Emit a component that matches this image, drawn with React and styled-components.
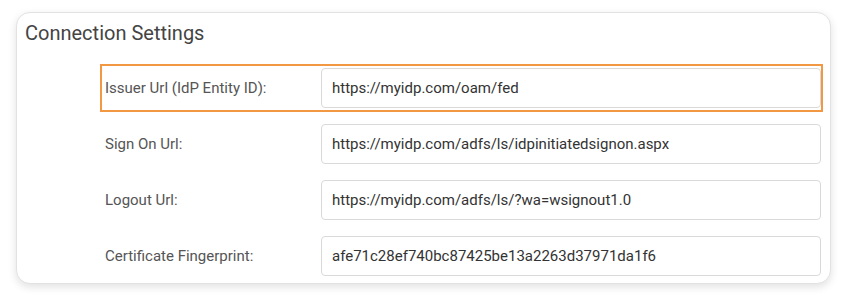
import styled, { createGlobalStyle } from "styled-components";

const GlobalStyle = createGlobalStyle`
    html, body {
        margin: 0;
        min-height: 304px;
        background: #fff;
        font-family: Roboto, "Liberation Sans", sans-serif;
    }
`;

const fields = [
    { label: "Issuer Url (IdP Entity ID):", value: "https://myidp.com/oam/fed", active: true },
    { label: "Sign On Url:", value: "https://myidp.com/adfs/ls/idpinitiatedsignon.aspx" },
    { label: "Logout Url:", value: "https://myidp.com/adfs/ls/?wa=wsignout1.0" },
    { label: "Certificate Fingerprint:", value: "afe71c28ef740bc87425be13a2263d37971da1f6" },
];

const App = () => {
    return (
        <>
            <GlobalStyle />
            <Page>
                <Card>
                    <Title>Connection Settings</Title>
                    <Form>
                        {fields.map((f) => (
                            <Row key={f.label} $active={f.active}>
                                <Label>{f.label}</Label>
                                <Input type="text" defaultValue={f.value} readOnly />
                            </Row>
                        ))}
                    </Form>
                </Card>
            </Page>
        </>
    );
};

const Page = styled.div`
    height: 304px;
    padding: 12px 0 0 16px;
    box-sizing: border-box;
`;

const Card = styled.div`
    box-sizing: border-box;
    width: 815px;
    height: 272px;
    background: #fff;
    border: 1px solid #e2e2e2;
    border-radius: 14px;
    box-shadow: 0 3px 8px rgba(0, 0, 0, 0.12);
`;

const Title = styled.h2`
    margin: 0;
    padding: 8px 8px 0;
    font-size: 20px;
    font-weight: 400;
    line-height: 24px;
    color: #444;
`;

const Form = styled.div`
    display: flex;
    flex-direction: column;
    gap: 8px;
    margin: 19px 0 0 83px;
    width: 723px;
`;

const Row = styled.div`
    box-sizing: border-box;
    display: flex;
    align-items: center;
    height: 48px;
    padding: 2px 0 2px 3px;
    border: 2px solid ${(p) => (p.$active ? "#f29843" : "transparent")};
`;

const Label = styled.label`
    width: 216px;
    flex-shrink: 0;
    font-size: 15px;
    color: #555;
`;

const Input = styled.input`
    box-sizing: border-box;
    width: 500px;
    height: 40px;
    padding: 0 10px;
    border: 1px solid #d9d9d9;
    border-radius: 4px;
    font-family: Roboto, "Liberation Sans", sans-serif;
    font-size: 15px;
    color: #333;
    outline: none;
`;

export default App;
